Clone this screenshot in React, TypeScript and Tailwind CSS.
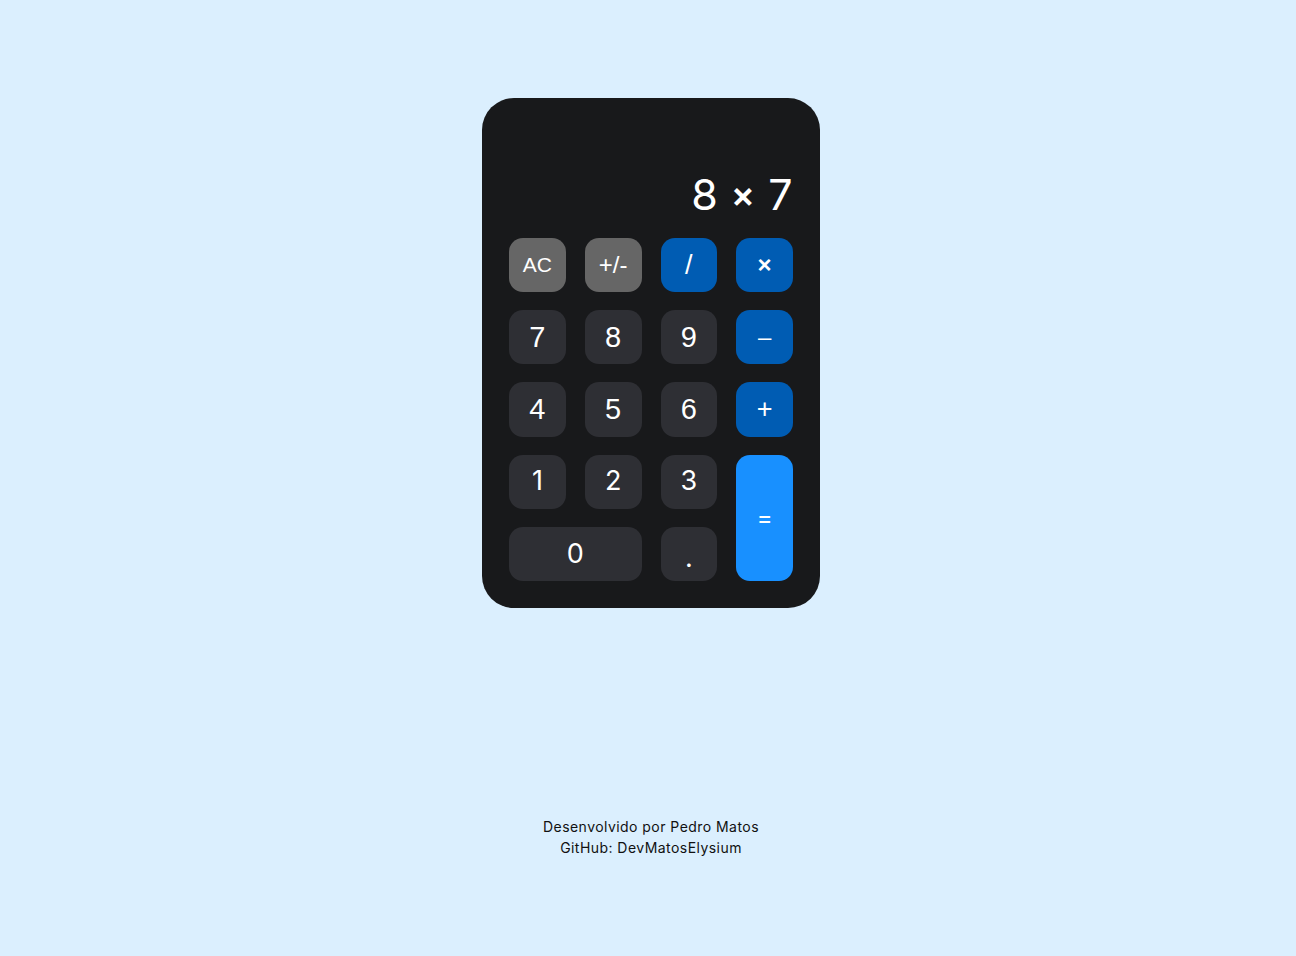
import React from "react";

const poppins = { fontFamily: '"Inter", "Noto Sans", sans-serif' };
const arial = { fontFamily: '"Liberation Sans", Arial, sans-serif' };

function Btn({
  label,
  className,
  font,
}: {
  label: string;
  className: string;
  font: React.CSSProperties;
}) {
  return (
    <button
      className={`flex items-center justify-center rounded-[14px] text-white ${className}`}
      style={font}
    >
      {label}
    </button>
  );
}

export default function App() {
  const num = "bg-[#2e2f34] text-[29px]";
  const numP = "bg-[#2e2f34] text-[27px]";
  const op = "bg-[#005cb3] text-[24px]";
  return (
    <div className="min-h-[956px] w-full bg-[#dbeffe] flex flex-col items-center pl-[6px]">
      <div className="mt-[98px] w-[338px] h-[510px] rounded-[32px] bg-[#18191b] p-[27px] flex flex-col">
        <div className="h-[95px] flex items-end justify-end pb-[4px]">
          <div
            className="text-white text-[43px] leading-none tracking-[0.5px]"
            style={poppins}
          >
            8{" "}
            <span className="relative -top-[3px] font-semibold text-[36px]">×</span>{" "}
            7
          </div>
        </div>
        <div className="mt-[18px] grid grid-cols-4 grid-rows-5 gap-x-[19px] gap-y-[18px] h-[343px]">
          <Btn label="AC" className="bg-[#666666] text-[21px]" font={arial} />
          <Btn label="+/-" className="bg-[#666666] text-[24px]" font={arial} />
          <Btn label="/" className={`${op} text-[27px]`} font={arial} />
          <Btn label="×" className={`${op} font-bold text-[22px]`} font={arial} />
          <Btn label="7" className={num} font={arial} />
          <Btn label="8" className={num} font={arial} />
          <Btn label="9" className={num} font={arial} />
          <Btn label="–" className={op} font={arial} />
          <Btn label="4" className={num} font={arial} />
          <Btn label="5" className={num} font={arial} />
          <Btn label="6" className={num} font={arial} />
          <Btn label="+" className={`${op} text-[27px]`} font={arial} />
          <Btn label="1" className={numP} font={poppins} />
          <Btn label="2" className={numP} font={poppins} />
          <Btn label="3" className={numP} font={poppins} />
          <Btn
            label="="
            className="row-span-2 bg-[#1890ff] text-[24px]"
            font={poppins}
          />
          <Btn label="0" className={`col-span-2 ${numP}`} font={poppins} />
          <Btn label="." className={`${numP} pt-[8px]`} font={poppins} />
        </div>
      </div>
      <div
        className="mt-[208px] text-center text-[14px] leading-[21px] text-[#111] tracking-[0.45px]"
        style={poppins}
      >
        <div>Desenvolvido por Pedro Matos</div>
        <div>GitHub: DevMatosElysium</div>
      </div>
    </div>
  );
}
